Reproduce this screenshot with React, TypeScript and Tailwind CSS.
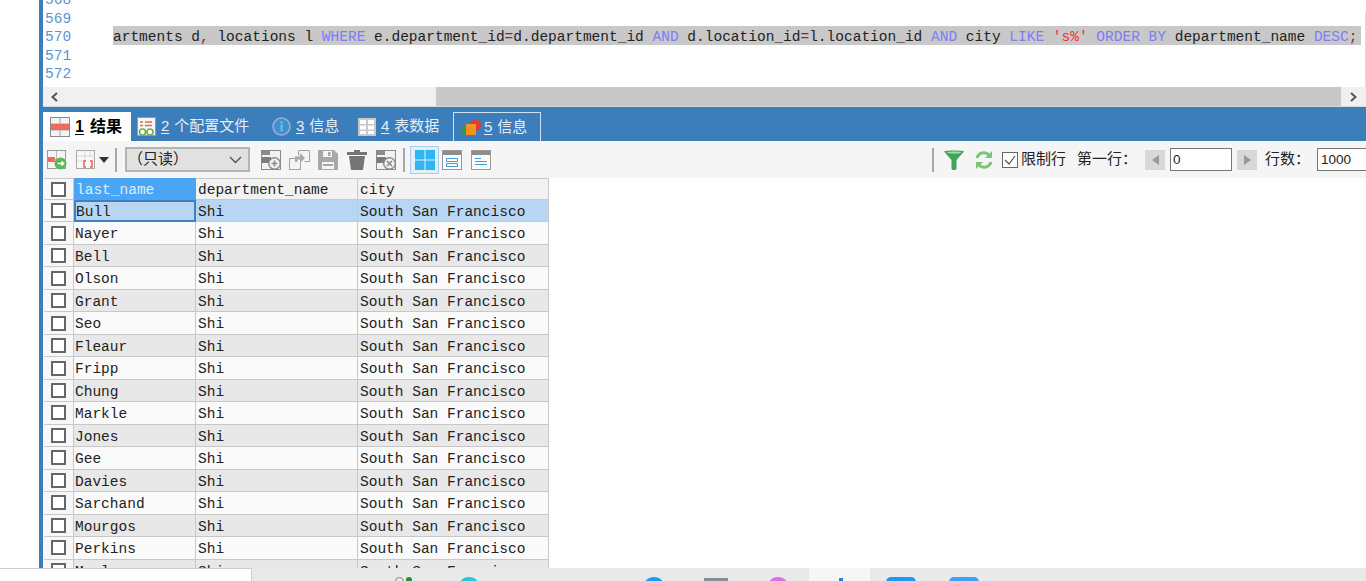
import React from 'react'

const mono = "font-['Liberation_Mono','DejaVu_Sans_Mono',monospace]"
const cjk = "font-['Liberation_Sans','Noto_Sans_CJK_SC',sans-serif]"

const names = ['Bull', 'Nayer', 'Bell', 'Olson', 'Grant', 'Seo', 'Fleaur', 'Fripp', 'Chung', 'Markle', 'Jones', 'Gee', 'Davies', 'Sarchand', 'Mourgos', 'Perkins', 'Marlow']

function AddIcon() {
  return (
    <svg width="20" height="20" viewBox="0 0 20 20" className="shrink-0">
      <rect x="0.5" y="0.5" width="18" height="18" fill="#f4f4f4" stroke="#999" />
      <path d="M9.5 1v18M1 9.5h18" stroke="#bbb" />
      <rect x="1" y="7" width="7" height="5" fill="#ef6a5a" />
      <circle cx="13.5" cy="13.5" r="6" fill="#5cb85c" />
      <path d="M10.5 13.5h6M14.5 11.5l2 2-2 2" stroke="#fff" strokeWidth="1.6" fill="none" />
    </svg>
  )
}

function BracketIcon() {
  return (
    <svg width="20" height="20" viewBox="0 0 20 20" className="shrink-0">
      <rect x="0.5" y="0.5" width="18" height="18" fill="#f7f7f7" stroke="#aaa" />
      <path d="M1 6h18M1 11h8M9 1v10M14 1v5" stroke="#d8d8d8" />
      <path d="M10 11H8v6h2M14 11h2v6h-2" stroke="#ee5a4a" strokeWidth="1.4" fill="none" />
    </svg>
  )
}

function RowActionIcon({ mark }: { mark: 'plus' | 'x' }) {
  return (
    <svg width="20" height="20" viewBox="0 0 20 20" className="shrink-0">
      <rect x="0.5" y="0.5" width="19" height="19" fill="#f2f2f2" stroke="#8a8a8a" />
      <rect x="1" y="1" width="8" height="4" fill="#8a8a8a" />
      <rect x="1" y="7" width="9" height="6" fill="#7b7b7b" />
      <circle cx="13.5" cy="13.5" r="5.8" fill="#f2f2f2" stroke="#8a8a8a" strokeWidth="1.4" />
      {mark === 'plus' ? (
        <path d="M10.5 13.5h6M13.5 10.5v6" stroke="#8a8a8a" strokeWidth="1.6" />
      ) : (
        <path d="M11 11l5 5M16 11l-5 5" stroke="#8a8a8a" strokeWidth="1.6" />
      )}
    </svg>
  )
}

function DuplicateIcon() {
  return (
    <svg width="21" height="20" viewBox="0 0 21 20" className="shrink-0">
      <path d="M9.5 5.5V.5h11v11h-5" fill="#f4f4f4" stroke="#a3a3a3" />
      <rect x="0.5" y="8.5" width="11" height="11" fill="#f4f4f4" stroke="#a3a3a3" />
      <path d="M6 12V6.5h5V3l5 5-5 5V9.5H8.5V12z" fill="#a9a9a9" />
    </svg>
  )
}

function SaveIcon() {
  return (
    <svg width="20" height="20" viewBox="0 0 20 20" className="shrink-0">
      <path d="M0 0h16l4 4v16H0z" fill="#a8a8a8" />
      <rect x="5" y="1" width="9" height="6" fill="#f5f5f5" />
      <rect x="10" y="2" width="2.5" height="4" fill="#a8a8a8" />
      <rect x="4" y="12" width="12" height="7" fill="#f5f5f5" />
      <rect x="5" y="14" width="10" height="2" fill="#a8a8a8" />
    </svg>
  )
}

function TrashIcon() {
  return (
    <svg width="20" height="20" viewBox="0 0 20 20" className="shrink-0">
      <path d="M7 0h6v2h7v3H0V2h7z" fill="#757575" />
      <path d="M2 6h16l-2 14H4z" fill="#757575" />
    </svg>
  )
}

function LayoutIcon({ kind }: { kind: 'two' | 'lines' }) {
  return (
    <svg width="20" height="20" viewBox="0 0 20 20" className="shrink-0">
      <rect x="0.5" y="0.5" width="19" height="19" fill="#fbfbfb" stroke="#9a9a9a" />
      <rect x="1" y="1" width="18" height="4" fill="#8d8d8d" />
      {kind === 'two' ? (
        <path d="M4.5 8.5h11v3h-11zM4.5 13.5h11v3h-11z" fill="none" stroke="#3aa0e6" />
      ) : (
        <path d="M4 8.5h6M4 11.5h12M4 14.5h12" stroke="#3aa0e6" />
      )}
    </svg>
  )
}

function SqlLine() {
  const kw = 'text-[#7d7df5]'
  const dk = 'text-[#8a2a2a]'
  return (
    <div className={`${mono} text-[14.5px] leading-[23px] h-[19px] bg-[#c8c8c8] text-[#222] whitespace-pre flex-1 overflow-hidden`}>
      artments d<span className={dk}>,</span> locations l <span className={kw}>WHERE</span> e.department_id<span className={dk}>=</span>d.department_id <span className={kw}>AND</span> d.location_id<span className={dk}>=</span>l.location_id <span className={kw}>AND</span> city <span className={kw}>LIKE</span> <span className="text-[#f03030]">'s%'</span> <span className={kw}>ORDER BY</span> department_name <span className={kw}>DESC</span><span className={dk}>;</span>
    </div>
  )
}

function Tab({ icon, num, label, gap }: { icon: React.ReactNode; num: string; label: string; gap: string }) {
  return (
    <div className={`flex items-center h-full shrink-0 text-[#e4eef8] text-[15px] ${gap}`}>
      {icon}
      <span className="underline underline-offset-2 ml-[5px]">{num}</span>
      <span className="ml-[5px]">{label}</span>
    </div>
  )
}

function Checkbox() {
  return <div className="w-[15px] h-[15px] border-2 border-[#666] bg-white" />
}

export default function App() {
  return (
    <div className="relative w-[1366px] h-[581px] overflow-hidden bg-white flex">
      <div className="w-[39px] shrink-0" />
      <div className="w-[4px] shrink-0 bg-[#3c7dbb]" />
      <div className="flex-1 min-w-0 flex flex-col">
        {/* editor */}
        <div className="h-[87px] shrink-0 flex relative overflow-hidden">
          <div className="flex-1 min-w-0 flex flex-col -mt-[11px]">
            {['568', '569', '570', '571', '572'].map((n) => (
              <div key={n} className="h-[18.6px] shrink-0 flex items-start">
                <span className={`${mono} w-[70px] pl-[2px] text-[14.5px] leading-[23px] text-[#5b93cf] shrink-0`}>{n}</span>
                {n === '570' && <SqlLine />}
              </div>
            ))}
          </div>
          <div className="w-[5px] shrink-0 pt-[13px] flex justify-end">
            <div className="w-[1px] h-full bg-[#dcdcdc]" />
          </div>
        </div>
        {/* scrollbar */}
        <div className="h-[20px] shrink-0 bg-[#f0f0f0] flex items-center border-b border-[#d8d8d8]">
          <span className="w-[393px] shrink-0 pl-[7px]">
            <svg width="9" height="10" viewBox="0 0 9 10"><path d="M7 1L2.5 5 7 9" fill="none" stroke="#555" strokeWidth="2" /></svg>
          </span>
          <div className="w-[905px] h-full bg-[#c8c8c8] shrink-0" />
          <span className="pl-[8px]">
            <svg width="9" height="10" viewBox="0 0 9 10"><path d="M2 1l4.5 4L2 9" fill="none" stroke="#555" strokeWidth="2" /></svg>
          </span>
        </div>
        {/* tabs */}
        <div className={`${cjk} h-[34px] shrink-0 bg-[#3c7dbb] flex items-end pt-[5px]`}>
          <div className="w-[88px] h-full bg-white flex items-center pl-[7px] text-black text-[16px] font-bold shrink-0">
            <svg width="20" height="20" viewBox="0 0 20 20" className="shrink-0">
              <rect x="0.5" y="0.5" width="19" height="19" fill="#f4f4f4" stroke="#8a8a8a" />
              <path d="M10 1v6M10 13v6M1 7h18M1 13h18" stroke="#a5a5a5" />
              <rect x="1" y="7" width="18" height="6" fill="#ee6a5e" />
            </svg>
            <span className="underline underline-offset-2 ml-[5px]">1</span>
            <span className="ml-[6px]">结果</span>
          </div>
          <Tab
            gap="ml-[6px] w-[135px]"
            num="2"
            label="个配置文件"
            icon={
              <svg width="19" height="20" viewBox="0 0 19 20" className="shrink-0">
                <rect x="0.5" y="0.5" width="18" height="18" fill="#f6f6f6" stroke="#999" />
                <path d="M3 5h3M8 5h7M3 8.5h3M8 8.5h7" stroke="#e0685c" strokeWidth="1.4" />
                <circle cx="5.5" cy="15" r="3" fill="#fff" stroke="#6fb04a" strokeWidth="1.6" />
                <circle cx="13" cy="15" r="3" fill="#fff" stroke="#6fb04a" strokeWidth="1.6" />
              </svg>
            }
          />
          <Tab
            gap="w-[86px]"
            num="3"
            label="信息"
            icon={
              <svg width="19" height="19" viewBox="0 0 19 19" className="shrink-0">
                <circle cx="9.5" cy="9.5" r="8.5" fill="#4a8ccb" stroke="#8db4da" strokeWidth="1.6" />
                <rect x="8.5" y="4" width="2.4" height="2.4" fill="#4fc0f5" />
                <rect x="8.5" y="7.5" width="2.4" height="7" fill="#4fc0f5" />
              </svg>
            }
          />
          <Tab
            gap="w-[95px]"
            num="4"
            label="表数据"
            icon={
              <svg width="18" height="18" viewBox="0 0 18 18" className="shrink-0">
                <rect width="18" height="18" fill="#c9c9c9" />
                <path d="M2 2h6v4H2zM10 2h6v4h-6zM2 7.5h6v4H2zM10 7.5h6v4h-6zM2 13h6v3H2zM10 13h6v3h-6z" fill="#fff" />
              </svg>
            }
          />
          <div className="w-[88px] h-full border border-b-0 border-[#cfe0f0] flex items-center pl-[6px] text-[#e4eef8] text-[15px] shrink-0">
            <svg width="22" height="18" viewBox="0 0 22 18" className="shrink-0">
              <path d="M0 15L5.5 6 11 15z" fill="#3f9a3f" />
              <circle cx="15.5" cy="7" r="5.5" fill="#e23c30" />
              <rect x="6" y="6" width="10" height="11" fill="#f5921e" />
            </svg>
            <span className="underline underline-offset-2 ml-[2px]">5</span>
            <span className="ml-[5px]">信息</span>
          </div>
        </div>
        {/* toolbar */}
        <div className={`${cjk} h-[37px] shrink-0 bg-[#f5f5f5] flex items-center text-[15px] text-[#222] overflow-hidden`}>
          <div className="ml-[4px] shrink-0"><AddIcon /></div>
          <div className="ml-[9px] flex items-center shrink-0">
            <BracketIcon />
            <svg width="10" height="6" viewBox="0 0 10 6" className="ml-[3px]"><path d="M0 0h10L5 6z" fill="#333" /></svg>
          </div>
          <div className="w-[2px] h-[24px] bg-[#a8a8a8] ml-[6px] shrink-0" />
          <div className="w-[125px] h-[25px] ml-[8px] bg-[#e1e1e1] border-2 border-[#b4b4b4] flex items-center justify-between pl-[1px] pr-[6px] shrink-0">
            <span>（只读）</span>
            <svg width="13" height="8" viewBox="0 0 13 8"><path d="M1 1l5.5 5.5L12 1" fill="none" stroke="#555" strokeWidth="1.4" /></svg>
          </div>
          <div className="ml-[11px] shrink-0"><RowActionIcon mark="plus" /></div>
          <div className="ml-[8px] shrink-0"><DuplicateIcon /></div>
          <div className="ml-[8px] shrink-0"><SaveIcon /></div>
          <div className="ml-[9px] shrink-0"><TrashIcon /></div>
          <div className="ml-[9px] shrink-0"><RowActionIcon mark="x" /></div>
          <div className="w-[2px] h-[24px] bg-[#a8a8a8] ml-[7px] shrink-0" />
          <div className="ml-[5px] w-[29px] h-[28px] bg-[#e3f0fb] border border-[#a5cdf0] flex items-center justify-center shrink-0">
            <svg width="20" height="20" viewBox="0 0 20 20"><path d="M0 0h9.5v9.5H0zM10.5 0H20v9.5h-9.5zM0 10.5h9.5V20H0zM10.5 10.5H20V20h-9.5z" fill="#2fb6f5" /></svg>
          </div>
          <div className="ml-[3px] shrink-0"><LayoutIcon kind="two" /></div>
          <div className="ml-[9px] shrink-0"><LayoutIcon kind="lines" /></div>

          <div className="w-[2px] h-[24px] bg-[#a8a8a8] ml-[441px] shrink-0" />
          <svg width="20" height="20" viewBox="0 0 20 20" className="ml-[10px] shrink-0">
            <path d="M0 1.5C0 0 20 0 20 1.5L12.5 10v8.5c0 2-5 2-5 0V10z" fill="#3fa55a" />
            <ellipse cx="10" cy="2.5" rx="7" ry="1" fill="#a6dcae" />
          </svg>
          <svg width="18" height="18" viewBox="0 0 18 18" className="ml-[11px] shrink-0">
            <path d="M2 7a7 7 0 0 1 12-3M16 11a7 7 0 0 1-12 3" fill="none" stroke="#7cc576" strokeWidth="3" />
            <path d="M10 7h7V0zM8 11H1v7z" fill="#7cc576" />
          </svg>
          <div className="ml-[9px] w-[16px] h-[16px] border border-[#666] bg-white flex items-center justify-center shrink-0">
            <svg width="12" height="10" viewBox="0 0 12 10"><path d="M1 5l4 4 6-8" fill="none" stroke="#555" strokeWidth="1.2" /></svg>
          </div>
          <span className="ml-[3px] whitespace-nowrap shrink-0">限制行</span>
          <span className="ml-[11px] whitespace-nowrap w-[68px] shrink-0">第一行：</span>
          <div className="w-[20px] h-[20px] bg-[#d8d8d8] flex items-center justify-center shrink-0">
            <svg width="7" height="10" viewBox="0 0 7 10"><path d="M7 0v10L0 5z" fill="#999" /></svg>
          </div>
          <div className="ml-[5px] w-[62px] h-[23px] bg-white border border-[#777] pl-[2px] text-[13.5px] leading-[21px] shrink-0">0</div>
          <div className="ml-[5px] w-[20px] h-[20px] bg-[#d8d8d8] flex items-center justify-center shrink-0">
            <svg width="7" height="10" viewBox="0 0 7 10"><path d="M0 0v10l7-5z" fill="#999" /></svg>
          </div>
          <span className="ml-[8px] whitespace-nowrap w-[52px] shrink-0">行数：</span>
          <div className="w-[60px] h-[23px] bg-white border border-[#777] pl-[3px] text-[13.5px] leading-[21px] shrink-0">1000</div>
        </div>
        {/* result grid */}
        <div className={`${mono} ml-[1px] w-[506px] text-[14.5px] text-[#222] grid grid-cols-[30px_122px_162px_191px]`}>
          <div className="h-[22px] bg-[#f7f7f7] border-r border-b border-t border-[#c8c8c8] flex items-center justify-center"><Checkbox /></div>
          <div className="h-[22px] bg-[#4aa6f5] text-[#dcedff] pl-[2px] leading-[24px]">last_name</div>
          <div className="h-[22px] bg-[#f2f2f2] border-r border-b border-t border-[#c8c8c8] pl-[2px] leading-[22px]">department_name</div>
          <div className="h-[22px] bg-[#f2f2f2] border-r border-b border-t border-[#c8c8c8] pl-[2px] leading-[22px]">city</div>
          {names.map((n, i) => {
            const sel = i === 0
            const bg = sel ? 'bg-[#b8d6f3]' : i % 2 ? 'bg-[#fafafa]' : 'bg-[#e8e8e8]'
            return (
              <React.Fragment key={n}>
                <div className="h-[22.47px] bg-[#f7f7f7] border-r border-b border-[#c8c8c8] flex items-center justify-center"><Checkbox /></div>
                <div className={`h-[22.47px] ${bg} ${sel ? 'border-2 border-[#3f7fbf] pl-0 leading-[21px]' : 'pl-[1px] leading-[25px] border-r border-b border-[#c8c8c8]'}`}>{n}</div>
                <div className={`h-[22.47px] ${bg} pl-[2px] leading-[25px] border-r border-b border-[#c8c8c8]`}>Shi</div>
                <div className={`h-[22.47px] ${bg} pl-[2px] leading-[25px] border-r border-b border-[#c8c8c8]`}>South San Francisco</div>
              </React.Fragment>
            )
          })}
        </div>
      </div>
      {/* taskbar sliver over the page bottom */}
      <div className="absolute left-0 bottom-0 h-[13px] w-full flex">
        <div className="w-[252px] bg-white border-t border-r border-[#cfcfcf]" />
        <div className="flex-1 bg-[#e9e9e9] relative overflow-hidden">
          <div className="absolute left-[143px] top-[9px] w-[9px] h-[9px] rounded-full border border-[#888]" />
          <div className="absolute left-[154px] top-[9px] w-[6px] h-[6px] rounded-full bg-[#2e8b3a]" />
          <div className="absolute left-[206px] top-[9px] w-[22px] h-[22px] rounded-full bg-[#2cc5d8]" />
          <div className="absolute left-[391px] top-[9px] w-[22px] h-[22px] rounded-full bg-[#1e9bf0]" />
          <div className="absolute left-[452px] top-[10px] w-[24px] h-[10px] bg-[#858d96]" />
          <div className="absolute left-[515px] top-[9px] w-[22px] h-[22px] rounded-full bg-[#df6be8]" />
          <div className="absolute left-[557px] top-0 w-[61px] h-full bg-[#f6f6f6]" />
          <div className="absolute left-[587px] top-[10px] w-[4px] h-[8px] bg-[#2f7fe0]" />
          <div className="absolute left-[634px] top-[9px] w-[30px] h-[10px] rounded-t-[5px] bg-[#1e9bf0]" />
          <div className="absolute left-[697px] top-[9px] w-[30px] h-[10px] rounded-t-[5px] bg-[#3fa0f8]" />
        </div>
      </div>
    </div>
  )
}
